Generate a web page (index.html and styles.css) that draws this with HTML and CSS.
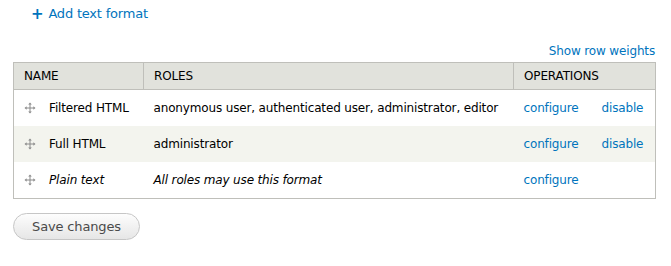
FILE: index.html
```
<!DOCTYPE html>
<html>
<head>
<meta charset="utf-8">
<link rel="stylesheet" href="styles.css">
</head>
<body>
<div class="page">
  <ul class="action-links">
    <li><a href="#" class="add-link"><span class="plus">+</span>Add text format</a></li>
  </ul>
  <div class="weights-row"><a href="#" class="weights">Show row weights</a></div>
  <table class="formats">
    <colgroup>
      <col class="c-name"><col class="c-roles"><col class="c-op1"><col class="c-op2">
    </colgroup>
    <thead>
      <tr>
        <th>NAME</th>
        <th>ROLES</th>
        <th colspan="2">OPERATIONS</th>
      </tr>
    </thead>
    <tbody>
      <tr class="odd">
        <td class="name"><span class="handle"><svg width="12" height="12" viewBox="0 0 12 12"><path d="M6 0.5 L4.2 2.6 H7.8 Z M6 11.5 L4.2 9.4 H7.8 Z M0.5 6 L2.6 4.2 V7.8 Z M11.5 6 L9.4 4.2 V7.8 Z" fill="#8a8a8a"/><path d="M6 2 V10 M2 6 H10" stroke="#8a8a8a" stroke-width="1"/></svg></span>Filtered HTML</td>
        <td>anonymous user, authenticated user, administrator, editor</td>
        <td class="op1"><a href="#">configure</a></td>
        <td class="op2"><a href="#">disable</a></td>
      </tr>
      <tr class="even">
        <td class="name"><span class="handle"><svg width="12" height="12" viewBox="0 0 12 12"><path d="M6 0.5 L4.2 2.6 H7.8 Z M6 11.5 L4.2 9.4 H7.8 Z M0.5 6 L2.6 4.2 V7.8 Z M11.5 6 L9.4 4.2 V7.8 Z" fill="#8a8a8a"/><path d="M6 2 V10 M2 6 H10" stroke="#8a8a8a" stroke-width="1"/></svg></span>Full HTML</td>
        <td>administrator</td>
        <td class="op1"><a href="#">configure</a></td>
        <td class="op2"><a href="#">disable</a></td>
      </tr>
      <tr class="odd">
        <td class="name"><span class="handle"><svg width="12" height="12" viewBox="0 0 12 12"><path d="M6 0.5 L4.2 2.6 H7.8 Z M6 11.5 L4.2 9.4 H7.8 Z M0.5 6 L2.6 4.2 V7.8 Z M11.5 6 L9.4 4.2 V7.8 Z" fill="#8a8a8a"/><path d="M6 2 V10 M2 6 H10" stroke="#8a8a8a" stroke-width="1"/></svg></span><em>Plain text</em></td>
        <td><em>All roles may use this format</em></td>
        <td class="op1"><a href="#">configure</a></td>
        <td class="op2"></td>
      </tr>
    </tbody>
  </table>
  <button class="save" type="button">Save changes</button>
</div>
</body>
</html>
```
FILE: styles.css
```
html, body {
  margin: 0;
  padding: 0;
  background: #fff;
}
body {
  font-family: "DejaVu Sans", Verdana, sans-serif;
  font-size: 12px;
  letter-spacing: -0.15px;
  color: #000;
}
a {
  color: #0074bd;
  text-decoration: none;
}
.page {
  padding: 0 15px 0 13px;
}
.action-links {
  list-style: none;
  margin: 0;
  padding: 5px 0 0 18px;
  height: 22px;
}
.add-link {
  font-size: 13px;
  display: inline-flex;
  align-items: center;
  gap: 5px;
  line-height: 18px;
  letter-spacing: -0.2px;
}
.plus {
  font-weight: bold;
  font-size: 15px;
}
.weights-row {
  display: flex;
  justify-content: flex-end;
  padding-top: 16px;
  height: 19px;
  line-height: 16px;
  padding-right: 1px;
}
.formats {
  width: 643px;
  table-layout: fixed;
  border-collapse: collapse;
  border: 1px solid #bfbfba;
  white-space: nowrap;
}
.c-name { width: 130px; }
.c-roles { width: 370px; }
.c-op1 { width: 88px; }
.formats th {
  background: #e1e2dc;
  text-align: left;
  font-weight: normal;
  height: 26px;
  padding: 0 10px;
  border-right: 1px solid #bfbfba;
  border-bottom: 1px solid #bfbfba;
  font-size: 12px;
}
.formats td {
  height: 36px;
  padding: 0 10px;
  vertical-align: middle;
}
.formats td.name {
  padding-left: 10px;
}
.handle {
  display: inline-block;
  vertical-align: middle;
  width: 12px;
  height: 12px;
  margin-right: 13px;
  position: relative;
  top: -1px;
}
.handle svg { display: block; }
.formats tr.even td {
  background: #f3f4ee;
}
.formats td.op1 {
  padding-right: 0;
}
.formats td.op2 {
  padding-left: 0;
}
.save {
  margin-top: 14px;
  height: 27px;
  width: 127px;
  border-radius: 14px;
  border: 1px solid #c6c6c6;
  background: linear-gradient(#fdfdfd, #e6e6e6);
  color: #4a4a4a;
  font-family: "DejaVu Sans", Verdana, sans-serif;
  font-size: 13px;
  letter-spacing: -0.15px;
  padding: 0;
}
```
